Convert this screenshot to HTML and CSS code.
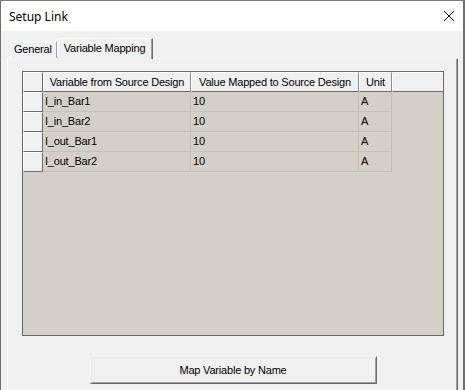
FILE: index.html
```html
<!DOCTYPE html>
<html>
<head>
  <title>Setup Link</title>
  <link rel="stylesheet" href="styles.css">
</head>
<body>
  <div class="window">
    <!-- Title bar -->
    <div class="titlebar">
      <span class="title">Setup Link</span>
      <svg class="close" viewBox="0 0 10 10" fill="none" stroke="#000" stroke-width="1">
        <line x1="0" y1="0" x2="10" y2="10"></line>
        <line x1="10" y1="0" x2="0" y2="10"></line>
      </svg>
    </div>

    <div class="dialog-body">
      <div class="tabs">
        <div class="tab">General</div>
        <div class="tab active">Variable Mapping</div>
      </div>

      <div class="panel">
        <!-- Mapping grid -->
        <div class="grid">
          <table>
            <thead>
              <tr>
                <th class="row-head col-rh"></th>
                <th class="col-var">Variable from Source Design</th>
                <th class="col-val">Value Mapped to Source Design</th>
                <th class="col-unit">Unit</th>
                <th class="col-rest"></th>
              </tr>
            </thead>
            <tbody>
              <tr>
                <td class="row-head"></td>
                <td>I_in_Bar1</td>
                <td>10</td>
                <td>A</td>
              </tr>
              <tr>
                <td class="row-head"></td>
                <td>I_in_Bar2</td>
                <td>10</td>
                <td>A</td>
              </tr>
              <tr>
                <td class="row-head"></td>
                <td>I_out_Bar1</td>
                <td>10</td>
                <td>A</td>
              </tr>
              <tr>
                <td class="row-head"></td>
                <td>I_out_Bar2</td>
                <td>10</td>
                <td>A</td>
              </tr>
            </tbody>
          </table>
        </div>

        <div class="actions">
          <button class="btn">Map Variable by Name</button>
        </div>
      </div>
    </div>
  </div>
</body>
</html>
```

FILE: styles.css
```css
* {
  box-sizing: border-box;
  margin: 0;
  padding: 0;
}

body {
  background: #6f6f6f;
  font-family: "Liberation Sans", Arial, sans-serif;
  font-size: 11px;
  letter-spacing: -0.2px;
  color: #000;
}

.window {
  width: 465px;
  height: 390px;
  overflow: hidden;
  display: flex;
  flex-direction: column;
  background: #f0f0f0;
  border-top: 1px solid #7a7a7a;
  border-left: 1px solid #6f6f6f;
  border-right: 2px solid #6f6f6f;
}

.titlebar {
  height: 30px;
  flex: none;
  display: flex;
  align-items: center;
  justify-content: space-between;
  padding: 0 9px 0 8px;
  background: #fff;
}

.title {
  font-family: "Noto Sans", "Open Sans", sans-serif;
  font-size: 12px;
  letter-spacing: 0;
}

.close {
  width: 10px;
  height: 10px;
}

.dialog-body {
  flex: 1;
  padding: 7px 5px 0 6px;
}

.tabs {
  display: flex;
  align-items: flex-end;
  padding-left: 3px;
}

.tab {
  height: 17px;
  padding: 0 4px 0 3px;
  line-height: 15px;
  border-top: 1px solid #fff;
  border-left: 1px solid #fff;
  border-right: 1px solid #a0a0a0;
}

.tab.active {
  position: relative;
  z-index: 1;
  height: 21px;
  margin-bottom: -1px;
  padding: 0 7px 0 6px;
  line-height: 18px;
  background: #f0f0f0;
  border-right: 1px solid #696969;
  box-shadow: inset -1px 0 #a0a0a0;
}

.panel {
  padding: 12px 13px 10px 14px;
  border-top: 1px solid #fff;
  border-left: 1px solid #fff;
  border-right: 1px solid #696969;
  box-shadow: inset -1px 0 #a0a0a0;
}

.grid {
  width: 422px;
  height: 265px;
  background: #d4d0c8;
  border: 1px solid #696969;
}

table {
  width: 420px;
  table-layout: fixed;
  border-collapse: separate;
  border-spacing: 0;
}

th, td {
  height: 20px;
  padding: 0 0 0 2px;
  line-height: 19px;
  font-weight: normal;
  text-align: left;
  white-space: nowrap;
  overflow: hidden;
}

th {
  text-align: center;
  padding: 0;
  background: #f0f0f0;
  border-top: 1px solid #fff;
  border-left: 1px solid #fff;
  border-right: 1px solid #8c8c8c;
  border-bottom: 1px solid #696969;
  line-height: 17px;
}

td {
  border-right: 1px solid #c4c1bb;
  border-bottom: 1px solid #c4c1bb;
}

.row-head,
th.row-head {
  background: #f0f0f0;
  border-top: 1px solid #fff;
  border-left: 1px solid #fff;
  border-right: 1px solid #696969;
  border-bottom: 1px solid #696969;
}

.col-rh { width: 20px; }
.col-var { width: 148px; }
.col-val { width: 168px; }
.col-unit { width: 33px; }
.col-rest { width: 51px; border-right: none; }

.actions {
  display: flex;
  justify-content: center;
  margin-top: 20px;
}

.btn {
  width: 287px;
  height: 28px;
  font-family: inherit;
  font-size: 11px;
  letter-spacing: -0.2px;
  color: #000;
  background: #f0f0f0;
  border: 1px solid;
  border-color: #fff #696969 #696969 #fff;
  box-shadow: inset 1px 1px #e3e3e3, inset -1px -1px #a0a0a0;
}
```
